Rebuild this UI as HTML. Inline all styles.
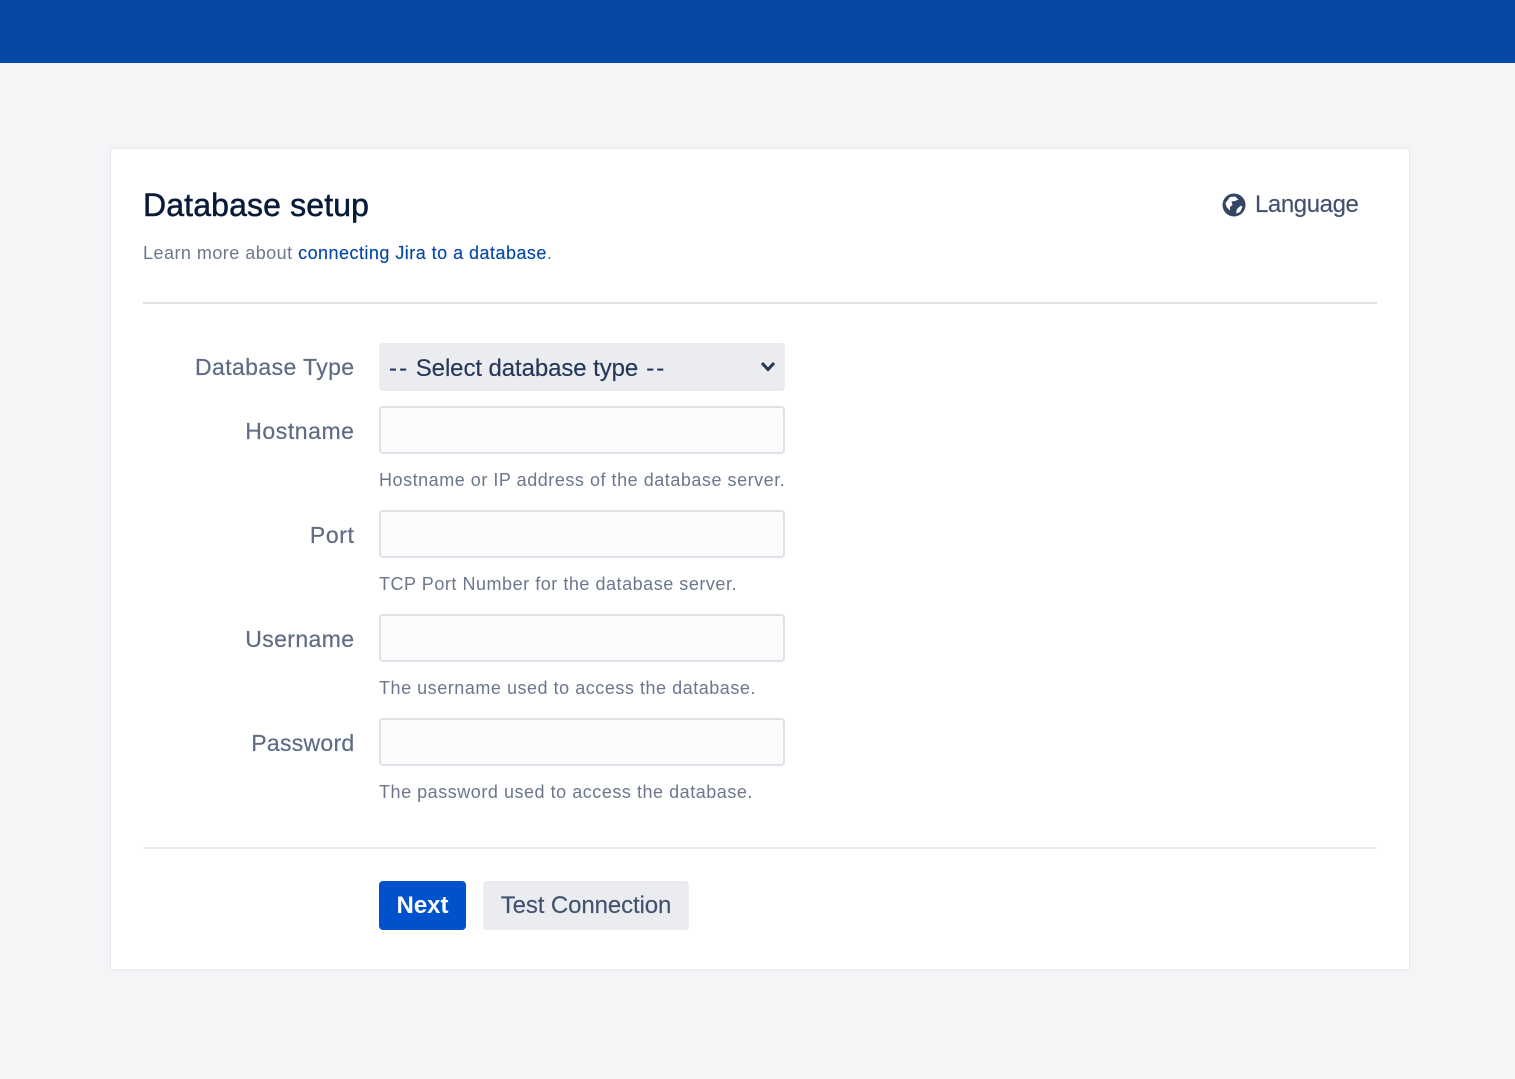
<!DOCTYPE html>
<html lang="en"><head><meta charset="utf-8"><title>Database setup</title>
<style>
html,body{margin:0;padding:0}
body{width:1515px;height:1079px;background:#f4f5f7;position:relative;overflow:hidden;font-family:"Liberation Sans",sans-serif}
.a{position:absolute;white-space:nowrap}
#top{left:0;top:0;width:1515px;height:63px;background:#0747a6}
#card{left:110px;top:148px;width:1298px;height:820px;background:#fff;border:1px solid #e9eaee;box-shadow:0 0 0 1px #eff0f3;border-radius:3px}
.hr{left:143px;width:1234px;background:#dfe1e6}
.lab{right:1160.5px;font-size:23px;line-height:28px;color:#5e6c84;letter-spacing:.4px;-webkit-text-stroke:.2px #5e6c84}
.inp{left:379px;width:402px;height:44px;background:#fafbfc;border:2px solid #dfe1e6;border-radius:4px}
.hint{left:379px;font-size:18px;line-height:22px;color:#6b778c;letter-spacing:.53px}
</style></head><body>
<div class="a" id="top"></div>
<div class="a" id="card"></div>
<div class="a" style="left:143px;top:186px;font-size:32px;line-height:38px;color:#091a38;letter-spacing:.14px;-webkit-text-stroke:.5px #091a38">Database setup</div>
<div class="a" style="left:143px;top:242px;font-size:18px;line-height:22px;color:#6b778c;letter-spacing:.47px">Learn more about <span style="color:#0747a6;-webkit-text-stroke:.15px #0747a6">connecting Jira to a database</span>.</div>
<svg class="a" style="left:1222px;top:193px" width="24" height="24" viewBox="0 0 24 24"><circle cx="12" cy="12" r="11.5" fill="#344563"/><path d="M3.5 10 L8 4 L13 3.5 L16.5 6.5 L13 8 L9.5 8.5 L10.5 12 L8 14 L8 17.5 L4.5 14 Z M14 20.5 L15 16 L19 12.5 L20.5 14 L18 19 Z" fill="#fff"/></svg>
<div class="a" style="left:1255px;top:190px;font-size:24px;line-height:29px;color:#42526e;letter-spacing:-.42px;-webkit-text-stroke:.15px #42526e">Language</div>
<div class="a hr" style="top:302px;height:2px"></div>
<div class="a lab" style="top:353px">Database Type</div>
<div class="a" style="left:379px;top:343px;width:406px;height:48px;background:#ebecf0;border-radius:4px"></div>
<div class="a" style="left:389px;top:354px;font-size:24px;line-height:29px;color:#253858;letter-spacing:-.09px;-webkit-text-stroke:.15px #253858"><span style="letter-spacing:2.1px">--</span> Select database type <span style="letter-spacing:2.1px;margin-left:1.5px">--</span></div>
<svg class="a" style="left:759px;top:360px" width="18" height="14" viewBox="0 0 18 14"><path d="M3 3 L9 9.5 L15 3" fill="none" stroke="#253858" stroke-width="3"/></svg>
<div class="a lab" style="top:417px;letter-spacing:.55px">Hostname</div>
<div class="a inp" style="top:406px"></div>
<div class="a hint" style="top:469px">Hostname or IP address of the database server.</div>
<div class="a lab" style="top:521px;letter-spacing:.6px">Port</div>
<div class="a inp" style="top:510px"></div>
<div class="a hint" style="top:573px">TCP Port Number for the database server.</div>
<div class="a lab" style="top:625px">Username</div>
<div class="a inp" style="top:614px"></div>
<div class="a hint" style="top:677px">The username used to access the database.</div>
<div class="a lab" style="top:729px;letter-spacing:.28px">Password</div>
<div class="a inp" style="top:718px"></div>
<div class="a hint" style="top:781px">The password used to access the database.</div>
<div class="a hr" style="top:847px;height:2px;background:#ebecf0"></div>
<div class="a" style="left:379px;top:881px;width:87px;height:49px;background:#0052cc;border-radius:4px;color:#fff;font-size:24px;font-weight:bold;line-height:49px;text-align:center">Next</div>
<div class="a" style="left:483px;top:881px;width:206px;height:49px;background:#ebecf0;border-radius:4px;color:#42526e;font-size:24px;line-height:49px;text-align:center;letter-spacing:-.1px;-webkit-text-stroke:.15px #42526e">Test Connection</div>
</body></html>
